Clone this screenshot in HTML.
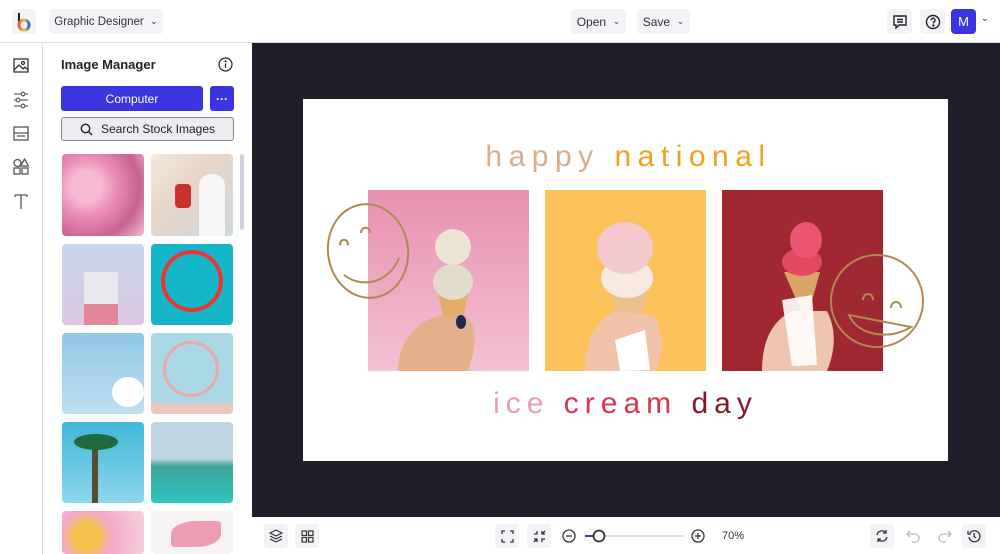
<!DOCTYPE html>
<html><head><style>
*{margin:0;padding:0;box-sizing:border-box}
body{width:1000px;height:554px;overflow:hidden;font-family:"Liberation Sans",sans-serif;background:#fff;position:relative;color:#222}
.abs{position:absolute}
.btn{position:absolute;background:#f3f3f7;border-radius:4px;font-size:12px;color:#333;display:flex;align-items:center;justify-content:center}
.thumb{position:absolute;width:82px;border-radius:4px;overflow:hidden}
.ic{position:absolute;width:24px;height:24px;border-radius:4px;background:#f3f3f7;display:flex;align-items:center;justify-content:center}
</style></head><body>
<div class="abs" style="left:0;top:0;width:1000px;height:43px;border-bottom:1px solid #dcdce4;background:#fff"></div>
<div class="btn" style="left:12px;top:9px;width:24px;height:25px">
<svg width="18" height="20" viewBox="0 0 18 20"><path d="M4 1v12" stroke="#222" stroke-width="2"/><circle cx="9" cy="13" r="5" fill="none" stroke="url(#g)" stroke-width="3"/><defs><linearGradient id="g"><stop offset="0" stop-color="#e53"/><stop offset=".5" stop-color="#fc3"/><stop offset="1" stop-color="#36c"/></linearGradient></defs></svg></div>
<div class="btn" style="left:49px;top:9px;width:114px;height:25px;font-size:11.5px">Graphic Designer&nbsp;&nbsp;<span style="font-size:9px">⌄</span></div>
<div class="btn" style="left:571px;top:9px;width:55px;height:25px">Open&nbsp;&nbsp;<span style="font-size:9px">⌄</span></div>
<div class="btn" style="left:637px;top:9px;width:53px;height:25px">Save&nbsp;&nbsp;<span style="font-size:9px">⌄</span></div>
<div class="btn" style="left:887px;top:9px;width:25px;height:25px"><svg width="14" height="14" viewBox="0 0 14 14" fill="none" stroke="#222" stroke-width="1.4"><path d="M1 1h12v9H6l-3 3v-3H1z"/><path d="M4 4.5h6M4 7h6"/></svg></div>
<div class="btn" style="left:920px;top:9px;width:25px;height:25px"><svg width="16" height="16" viewBox="0 0 16 16" fill="none" stroke="#222" stroke-width="1.4"><circle cx="8" cy="8" r="6.5"/><path d="M6 6.3a2 2 0 1 1 2.5 1.9V9.5"/><circle cx="8.4" cy="11.5" r=".5" fill="#222"/></svg></div>
<div class="abs" style="left:951px;top:9px;width:25px;height:25px;border-radius:4px;background:#3b35e0;color:#fff;font-size:13px;display:flex;align-items:center;justify-content:center">M</div>
<div class="abs" style="left:981px;top:13px;font-size:9px;color:#333">⌄</div>
<div class="abs" style="left:0;top:43px;width:43px;height:511px;border-right:1px solid #dcdce4"></div>
<svg class="abs" style="left:13px;top:57px" width="16" height="160" viewBox="0 0 16 160" fill="none" stroke="#333" stroke-width="1.3">
<rect x="1" y="2" width="14" height="13"/><circle cx="10" cy="6" r="1.5"/><path d="M1 13l5-5 4 4 2-2 3 3"/>
<g stroke="#666"><path d="M1 37h14M1 43h14M1 49h14"/><circle cx="10" cy="37" r="1.8" fill="#fff"/><circle cx="5" cy="43" r="1.8" fill="#fff"/><circle cx="10" cy="49" r="1.8" fill="#fff"/></g>
<rect x="1" y="70" width="14" height="13" stroke="#555"/><path d="M1 76h14M4 79h8" stroke="#555"/>
<circle cx="4.5" cy="106" r="3.5" stroke="#555"/><path d="M11.5 102l4 7h-8z" stroke="#555"/><rect x="1" y="111" width="6" height="6" stroke="#555"/><rect x="9" y="111" width="6" height="6" stroke="#555"/>
<path d="M2 138h12M8 138v14M2 138v2M14 138v2" stroke="#555"/>
</svg>
<div class="abs" style="left:61px;top:57px;font-size:13px;font-weight:bold;color:#222">Image Manager</div>
<svg class="abs" style="left:218px;top:57px" width="15" height="15" viewBox="0 0 15 15" fill="none" stroke="#222" stroke-width="1.2"><circle cx="7.5" cy="7.5" r="6.5"/><path d="M7.5 6.5v4.5"/><circle cx="7.5" cy="4.3" r=".5" fill="#222"/></svg>
<div class="abs" style="left:61px;top:86px;width:142px;height:25px;border-radius:3px;background:#3b35e0;color:#fff;font-size:12px;display:flex;align-items:center;justify-content:center">Computer</div>
<div class="abs" style="left:210px;top:86px;width:24px;height:25px;border-radius:3px;background:#3b35e0;color:#fff;font-size:12px;display:flex;align-items:center;justify-content:center;font-weight:bold;line-height:1">···</div>
<div class="abs" style="left:61px;top:117px;width:173px;height:24px;border-radius:3px;background:#ececf2;border:1px solid #888;font-size:12px;display:flex;align-items:center;justify-content:center;color:#222"><svg width="13" height="13" viewBox="0 0 13 13" fill="none" stroke="#222" stroke-width="1.4" style="margin-right:8px"><circle cx="5.5" cy="5.5" r="4.2"/><path d="M8.5 8.5l3.5 3.5"/></svg>Search Stock Images</div>
<div class="abs" style="left:240px;top:154px;width:4px;height:76px;border-radius:2px;background:#cfcfd6"></div>
<div class="thumb" style="left:62px;top:154px;height:82px;background:radial-gradient(circle at 30% 40%,#f6b9d3 0 20%,#e98bb6 40%,#c96291 70%,#f0c0d4)"></div>
<div class="thumb" style="left:151px;top:154px;height:82px;background:linear-gradient(135deg,#f4e8dc 0,#e8d6c8 40%,#cfd8dc 100%)"><div class="abs" style="left:24px;top:30px;width:16px;height:24px;background:#c8342c;border-radius:4px"></div><div class="abs" style="left:48px;top:20px;width:26px;height:62px;background:#f7f7f7;border-radius:12px 12px 0 0"></div></div>
<div class="thumb" style="left:62px;top:244px;height:81px;background:linear-gradient(#c7d6ee,#dcc7e2)"><div class="abs" style="left:22px;top:28px;width:34px;height:53px;background:#e8e8ee"></div><div class="abs" style="left:22px;top:60px;width:34px;height:21px;background:#e4869a"></div></div>
<div class="thumb" style="left:151px;top:244px;height:81px;background:#14b6c8"><div class="abs" style="left:10px;top:6px;width:62px;height:62px;border-radius:50%;border:4px solid #e33"></div></div>
<div class="thumb" style="left:62px;top:333px;height:81px;background:linear-gradient(#8fc7e5,#bfe0f0)"><div class="abs" style="left:50px;top:44px;width:32px;height:30px;border-radius:50%;background:#fff"></div></div>
<div class="thumb" style="left:151px;top:333px;height:81px;background:#a9d7e6"><div class="abs" style="left:12px;top:8px;width:56px;height:56px;border-radius:50%;border:3px solid #e8a8a8"></div><div class="abs" style="left:0;top:70px;width:82px;height:11px;background:#e8c8c0"></div></div>
<div class="thumb" style="left:62px;top:422px;height:81px;background:linear-gradient(#40b8d8,#8ed6ea)"><div class="abs" style="left:30px;top:20px;width:6px;height:61px;background:#5a4a30"></div><div class="abs" style="left:12px;top:12px;width:44px;height:16px;border-radius:50%;background:#1f6a3a"></div></div>
<div class="thumb" style="left:151px;top:422px;height:81px;background:linear-gradient(#bfd6e2 0,#bfd6e2 45%,#3ea39a 55%,#2fc4c4 100%)"></div>
<div class="thumb" style="left:62px;top:511px;height:43px;background:radial-gradient(circle at 30% 60%,#f4c24a 0 20%,#f2a7c5 40%,#f7d2e0)"></div>
<div class="thumb" style="left:151px;top:511px;height:43px;background:#f7f3f4"><div class="abs" style="left:20px;top:10px;width:50px;height:26px;background:#ec9fb3;border-radius:50% 10% 50% 10%"></div></div>
<div class="abs" style="left:252px;top:43px;width:748px;height:474px;background:#1f1f29"></div>
<div class="abs" style="left:303px;top:99px;width:645px;height:362px;background:#fff"></div>
<div class="abs" style="left:303px;top:137px;width:645px;text-align:center;font-size:30px;letter-spacing:6.5px;color:#d7ae8e;line-height:40px;padding-left:6px">happy <span style="color:#f0a21f">national</span></div>
<div class="abs" style="left:303px;top:384px;width:645px;text-align:center;font-size:30px;letter-spacing:6px;color:#ec9fb0;line-height:40px">ice <span style="color:#d8364a">cream</span> <span style="color:#8a1824">day</span></div>
<svg class="abs" style="left:368px;top:190px" width="161" height="181" viewBox="0 0 161 181"><defs><linearGradient id="p1" x1="0" y1="0" x2="0" y2="1"><stop offset="0" stop-color="#e891b0"/><stop offset="1" stop-color="#f3c1d3"/></linearGradient></defs><rect width="161" height="181" fill="url(#p1)"/><path d="M68 95l34 0-16 80z" fill="#e2ae69"/><ellipse cx="85" cy="92" rx="20" ry="18" fill="#e3dccc"/><ellipse cx="85" cy="57" rx="18" ry="18" fill="#ebe5d4"/><path d="M30 181c0-30 20-50 40-55l30 2c10 10 8 30 0 53z" fill="#e3b08c"/><ellipse cx="93" cy="132" rx="5" ry="7" fill="#1f2a52"/></svg>
<svg class="abs" style="left:545px;top:190px" width="161" height="181" viewBox="0 0 161 181"><rect width="161" height="181" fill="#fcc25a"/><path d="M64 92l40 0-18 90z" fill="#e8c08e"/><ellipse cx="82" cy="88" rx="26" ry="20" fill="#f5e9e0"/><ellipse cx="80" cy="58" rx="28" ry="26" fill="#f3c9cf"/><path d="M40 181c0-30 10-50 30-60l40 5c10 20 8 40 0 55z" fill="#f0c2a8"/><path d="M70 150l30-10 5 40-30 1z" fill="#fff"/></svg>
<svg class="abs" style="left:722px;top:190px" width="161" height="181" viewBox="0 0 161 181"><rect width="161" height="181" fill="#a02830"/><path d="M62 82l36 0-14 50z" fill="#d7a667"/><ellipse cx="80" cy="72" rx="20" ry="14" fill="#e34a62"/><ellipse cx="84" cy="50" rx="16" ry="18" fill="#ea5570"/><path d="M40 181c0-30 10-50 30-60l35 0c10 20 8 40 0 60z" fill="#efc4b0"/><path d="M60 110l30-5 5 70-25 1z" fill="#fff" opacity=".9"/></svg>
<svg class="abs" style="left:325px;top:203px" width="90" height="100" viewBox="0 0 90 100" fill="none" stroke="#b08a52" stroke-width="2"><ellipse cx="43" cy="48" rx="40" ry="47" transform="rotate(-8 43 48)"/><path d="M15 42c0-7 8-7 8 0M36 30c0-7 9-7 9 0M19 72c18 14 45 8 55-17"/></svg>
<svg class="abs" style="left:827px;top:252px" width="100" height="98" viewBox="0 0 100 98" fill="none" stroke="#b08a52" stroke-width="2"><circle cx="50" cy="49" r="46"/><path d="M36 48c0-8 10-8 10 0M64 56c0-8 10-8 10 0M22 63c8 20 40 26 62 12z"/></svg>
<div class="abs" style="left:252px;top:517px;width:748px;height:37px;background:#fff"></div>
<div class="ic" style="left:264px;top:524px"><svg width="14" height="14" viewBox="0 0 14 14" fill="none" stroke="#333" stroke-width="1.2"><path d="M7 1l6 3-6 3-6-3z M1 7l6 3 6-3 M1 10l6 3 6-3"/></svg></div>
<div class="ic" style="left:295px;top:524px"><svg width="13" height="13" viewBox="0 0 13 13" fill="none" stroke="#333" stroke-width="1.2"><rect x="1" y="1" width="4.5" height="4.5"/><rect x="7.5" y="1" width="4.5" height="4.5"/><rect x="1" y="7.5" width="4.5" height="4.5"/><rect x="7.5" y="7.5" width="4.5" height="4.5"/></svg></div>
<div class="ic" style="left:495px;top:524px"><svg width="13" height="13" viewBox="0 0 13 13" fill="none" stroke="#333" stroke-width="1.3"><path d="M1 4V1h3M9 1h3v3M12 9v3H9M4 12H1V9"/></svg></div>
<div class="ic" style="left:527px;top:524px"><svg width="13" height="13" viewBox="0 0 13 13" fill="none" stroke="#333" stroke-width="1.3"><path d="M1 4h3V1M9 1v3h3M12 9H9v3M4 12V9H1M9 4l3-3M4 9l-3 3"/></svg></div>
<svg class="abs" style="left:561px;top:528px" width="150" height="16" viewBox="0 0 150 16" fill="none" stroke="#333" stroke-width="1.3"><circle cx="8" cy="8" r="6"/><path d="M5 8h6"/><path d="M24 8h8" stroke="#3b35e0" stroke-width="2"/><path d="M44 8h78" stroke="#ccc"/><circle cx="38" cy="8" r="5.5" stroke-width="1.8" fill="#fff"/><circle cx="137" cy="8" r="6"/><path d="M134 8h6M137 5v6"/></svg>
<div class="abs" style="left:722px;top:530px;font-size:11px;color:#333">70%</div>
<div class="ic" style="left:870px;top:524px"><svg width="14" height="14" viewBox="0 0 14 14" fill="none" stroke="#333" stroke-width="1.3"><path d="M2 6a5 5 0 0 1 9-2M12 8a5 5 0 0 1-9 2M11 1v3H8M3 13v-3h3"/></svg></div>
<svg class="abs" style="left:906px;top:529px" width="46" height="14" viewBox="0 0 46 14" fill="none" stroke="#bbb" stroke-width="1.3"><path d="M4 2L1 5l3 3M1 5h8a4 4 0 0 1 0 8H6"/><path d="M42 2l3 3-3 3M45 5h-8a4 4 0 0 0 0 8h3"/></svg>
<div class="ic" style="left:962px;top:524px"><svg width="14" height="14" viewBox="0 0 14 14" fill="none" stroke="#333" stroke-width="1.3"><path d="M3 4a5.5 5.5 0 1 1-1 4M1 2v3h3M7 4v3.5l2 1.5"/></svg></div>
</body></html>
